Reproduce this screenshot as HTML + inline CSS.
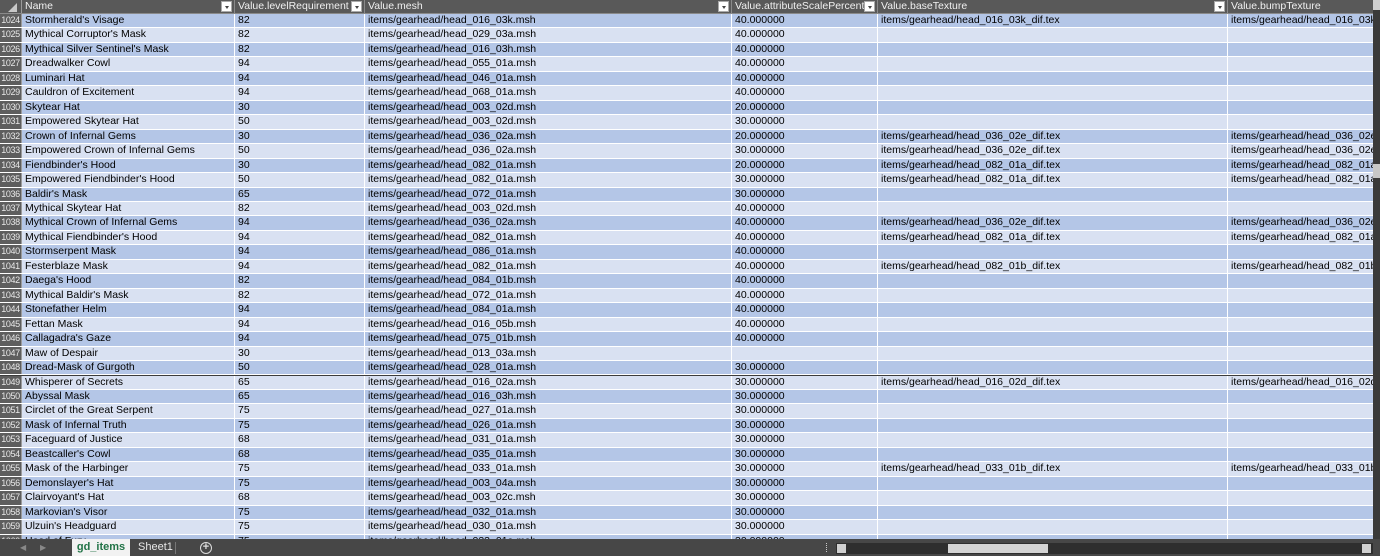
<!DOCTYPE html>
<html><head><meta charset="utf-8"><style>
*{margin:0;padding:0;box-sizing:border-box}
body{width:1380px;height:556px;overflow:hidden;background:#3c3c3c;font-family:"Liberation Sans",Arial,sans-serif;font-size:10.5px;position:relative}
.r{position:absolute;left:0;width:1373px;height:14.46px;display:flex;border-bottom:1px solid #fff}
.r div{border-right:1px solid #fff;padding-left:3px;white-space:nowrap;overflow:hidden;line-height:13.5px;color:#000}
.r .n{width:22px;background:#5e5e5e;color:#e8e8e8;padding-left:0;font-size:9px;letter-spacing:-0.4px;text-align:center;border-right:1px solid #9a9a9a}
.c1{width:213px}.c2{width:130px}.c3{width:367px}.c4{width:146px}.c5{width:350px}.c6{width:145px;border-right:none!important}
.o{background:#b4c6e7}.e{background:#d9e1f2}
.h{top:0;height:14px;background:#595959;border-bottom:1px solid #8a8a8a}
.h div{color:#f0f0f0;position:relative;border-right:1px solid #8a8a8a}
.h div i{position:absolute;right:2px;top:1px;width:11px;height:11px;background:#fff;border:1px solid #aaa}
.h div i:after{content:"";position:absolute;left:3px;top:4px;border:2px solid transparent;border-top:3px solid #444}
.h .n{background:#595959}
.tri{position:absolute;left:8px;top:3px;width:0;height:0;border-left:9px solid transparent;border-bottom:9px solid #c8c8c8}
</style></head><body>
<div class="r h"><div class="n"><span class="tri"></span></div><div class="c1">Name<i></i></div><div class="c2">Value.levelRequirement<i></i></div><div class="c3">Value.mesh<i></i></div><div class="c4">Value.attributeScalePercent<i></i></div><div class="c5">Value.baseTexture<i></i></div><div class="c6">Value.bumpTexture</div></div>
<div class="r o" style="top:14px"><div class="n">1024</div><div class="c1">Stormherald's Visage</div><div class="c2">82</div><div class="c3">items/gearhead/head_016_03k.msh</div><div class="c4">40.000000</div><div class="c5">items/gearhead/head_016_03k_dif.tex</div><div class="c6">items/gearhead/head_016_03k_</div></div>
<div class="r e" style="top:28.46px"><div class="n">1025</div><div class="c1">Mythical Corruptor's Mask</div><div class="c2">82</div><div class="c3">items/gearhead/head_029_03a.msh</div><div class="c4">40.000000</div><div class="c5"></div><div class="c6"></div></div>
<div class="r o" style="top:42.92px"><div class="n">1026</div><div class="c1">Mythical Silver Sentinel's Mask</div><div class="c2">82</div><div class="c3">items/gearhead/head_016_03h.msh</div><div class="c4">40.000000</div><div class="c5"></div><div class="c6"></div></div>
<div class="r e" style="top:57.38px"><div class="n">1027</div><div class="c1">Dreadwalker Cowl</div><div class="c2">94</div><div class="c3">items/gearhead/head_055_01a.msh</div><div class="c4">40.000000</div><div class="c5"></div><div class="c6"></div></div>
<div class="r o" style="top:71.84px"><div class="n">1028</div><div class="c1">Luminari Hat</div><div class="c2">94</div><div class="c3">items/gearhead/head_046_01a.msh</div><div class="c4">40.000000</div><div class="c5"></div><div class="c6"></div></div>
<div class="r e" style="top:86.3px"><div class="n">1029</div><div class="c1">Cauldron of Excitement</div><div class="c2">94</div><div class="c3">items/gearhead/head_068_01a.msh</div><div class="c4">40.000000</div><div class="c5"></div><div class="c6"></div></div>
<div class="r o" style="top:100.76px"><div class="n">1030</div><div class="c1">Skytear Hat</div><div class="c2">30</div><div class="c3">items/gearhead/head_003_02d.msh</div><div class="c4">20.000000</div><div class="c5"></div><div class="c6"></div></div>
<div class="r e" style="top:115.22px"><div class="n">1031</div><div class="c1">Empowered Skytear Hat</div><div class="c2">50</div><div class="c3">items/gearhead/head_003_02d.msh</div><div class="c4">30.000000</div><div class="c5"></div><div class="c6"></div></div>
<div class="r o" style="top:129.68px"><div class="n">1032</div><div class="c1">Crown of Infernal Gems</div><div class="c2">30</div><div class="c3">items/gearhead/head_036_02a.msh</div><div class="c4">20.000000</div><div class="c5">items/gearhead/head_036_02e_dif.tex</div><div class="c6">items/gearhead/head_036_02e_</div></div>
<div class="r e" style="top:144.14px"><div class="n">1033</div><div class="c1">Empowered Crown of Infernal Gems</div><div class="c2">50</div><div class="c3">items/gearhead/head_036_02a.msh</div><div class="c4">30.000000</div><div class="c5">items/gearhead/head_036_02e_dif.tex</div><div class="c6">items/gearhead/head_036_02e_</div></div>
<div class="r o" style="top:158.6px"><div class="n">1034</div><div class="c1">Fiendbinder's Hood</div><div class="c2">30</div><div class="c3">items/gearhead/head_082_01a.msh</div><div class="c4">20.000000</div><div class="c5">items/gearhead/head_082_01a_dif.tex</div><div class="c6">items/gearhead/head_082_01a_</div></div>
<div class="r e" style="top:173.06px"><div class="n">1035</div><div class="c1">Empowered Fiendbinder's Hood</div><div class="c2">50</div><div class="c3">items/gearhead/head_082_01a.msh</div><div class="c4">30.000000</div><div class="c5">items/gearhead/head_082_01a_dif.tex</div><div class="c6">items/gearhead/head_082_01a_</div></div>
<div class="r o" style="top:187.52px"><div class="n">1036</div><div class="c1">Baldir's Mask</div><div class="c2">65</div><div class="c3">items/gearhead/head_072_01a.msh</div><div class="c4">30.000000</div><div class="c5"></div><div class="c6"></div></div>
<div class="r e" style="top:201.98px"><div class="n">1037</div><div class="c1">Mythical Skytear Hat</div><div class="c2">82</div><div class="c3">items/gearhead/head_003_02d.msh</div><div class="c4">40.000000</div><div class="c5"></div><div class="c6"></div></div>
<div class="r o" style="top:216.44px"><div class="n">1038</div><div class="c1">Mythical Crown of Infernal Gems</div><div class="c2">94</div><div class="c3">items/gearhead/head_036_02a.msh</div><div class="c4">40.000000</div><div class="c5">items/gearhead/head_036_02e_dif.tex</div><div class="c6">items/gearhead/head_036_02e_</div></div>
<div class="r e" style="top:230.9px"><div class="n">1039</div><div class="c1">Mythical Fiendbinder's Hood</div><div class="c2">94</div><div class="c3">items/gearhead/head_082_01a.msh</div><div class="c4">40.000000</div><div class="c5">items/gearhead/head_082_01a_dif.tex</div><div class="c6">items/gearhead/head_082_01a_</div></div>
<div class="r o" style="top:245.36px"><div class="n">1040</div><div class="c1">Stormserpent Mask</div><div class="c2">94</div><div class="c3">items/gearhead/head_086_01a.msh</div><div class="c4">40.000000</div><div class="c5"></div><div class="c6"></div></div>
<div class="r e" style="top:259.82px"><div class="n">1041</div><div class="c1">Festerblaze Mask</div><div class="c2">94</div><div class="c3">items/gearhead/head_082_01a.msh</div><div class="c4">40.000000</div><div class="c5">items/gearhead/head_082_01b_dif.tex</div><div class="c6">items/gearhead/head_082_01b_</div></div>
<div class="r o" style="top:274.28px"><div class="n">1042</div><div class="c1">Daega's Hood</div><div class="c2">82</div><div class="c3">items/gearhead/head_084_01b.msh</div><div class="c4">40.000000</div><div class="c5"></div><div class="c6"></div></div>
<div class="r e" style="top:288.74px"><div class="n">1043</div><div class="c1">Mythical Baldir's Mask</div><div class="c2">82</div><div class="c3">items/gearhead/head_072_01a.msh</div><div class="c4">40.000000</div><div class="c5"></div><div class="c6"></div></div>
<div class="r o" style="top:303.2px"><div class="n">1044</div><div class="c1">Stonefather Helm</div><div class="c2">94</div><div class="c3">items/gearhead/head_084_01a.msh</div><div class="c4">40.000000</div><div class="c5"></div><div class="c6"></div></div>
<div class="r e" style="top:317.66px"><div class="n">1045</div><div class="c1">Fettan Mask</div><div class="c2">94</div><div class="c3">items/gearhead/head_016_05b.msh</div><div class="c4">40.000000</div><div class="c5"></div><div class="c6"></div></div>
<div class="r o" style="top:332.12px"><div class="n">1046</div><div class="c1">Callagadra's Gaze</div><div class="c2">94</div><div class="c3">items/gearhead/head_075_01b.msh</div><div class="c4">40.000000</div><div class="c5"></div><div class="c6"></div></div>
<div class="r e" style="top:346.58px"><div class="n">1047</div><div class="c1">Maw of Despair</div><div class="c2">30</div><div class="c3">items/gearhead/head_013_03a.msh</div><div class="c4"></div><div class="c5"></div><div class="c6"></div></div>
<div class="r o" style="top:361.04px"><div class="n">1048</div><div class="c1">Dread-Mask of Gurgoth</div><div class="c2">50</div><div class="c3">items/gearhead/head_028_01a.msh</div><div class="c4">30.000000</div><div class="c5"></div><div class="c6"></div></div>
<div class="r e" style="top:375.5px"><div class="n">1049</div><div class="c1">Whisperer of Secrets</div><div class="c2">65</div><div class="c3">items/gearhead/head_016_02a.msh</div><div class="c4">30.000000</div><div class="c5">items/gearhead/head_016_02d_dif.tex</div><div class="c6">items/gearhead/head_016_02d_</div></div>
<div class="r o" style="top:389.96px"><div class="n">1050</div><div class="c1">Abyssal Mask</div><div class="c2">65</div><div class="c3">items/gearhead/head_016_03h.msh</div><div class="c4">30.000000</div><div class="c5"></div><div class="c6"></div></div>
<div class="r e" style="top:404.42px"><div class="n">1051</div><div class="c1">Circlet of the Great Serpent</div><div class="c2">75</div><div class="c3">items/gearhead/head_027_01a.msh</div><div class="c4">30.000000</div><div class="c5"></div><div class="c6"></div></div>
<div class="r o" style="top:418.88px"><div class="n">1052</div><div class="c1">Mask of Infernal Truth</div><div class="c2">75</div><div class="c3">items/gearhead/head_026_01a.msh</div><div class="c4">30.000000</div><div class="c5"></div><div class="c6"></div></div>
<div class="r e" style="top:433.34px"><div class="n">1053</div><div class="c1">Faceguard of Justice</div><div class="c2">68</div><div class="c3">items/gearhead/head_031_01a.msh</div><div class="c4">30.000000</div><div class="c5"></div><div class="c6"></div></div>
<div class="r o" style="top:447.8px"><div class="n">1054</div><div class="c1">Beastcaller's Cowl</div><div class="c2">68</div><div class="c3">items/gearhead/head_035_01a.msh</div><div class="c4">30.000000</div><div class="c5"></div><div class="c6"></div></div>
<div class="r e" style="top:462.26px"><div class="n">1055</div><div class="c1">Mask of the Harbinger</div><div class="c2">75</div><div class="c3">items/gearhead/head_033_01a.msh</div><div class="c4">30.000000</div><div class="c5">items/gearhead/head_033_01b_dif.tex</div><div class="c6">items/gearhead/head_033_01b_</div></div>
<div class="r o" style="top:476.72px"><div class="n">1056</div><div class="c1">Demonslayer's Hat</div><div class="c2">75</div><div class="c3">items/gearhead/head_003_04a.msh</div><div class="c4">30.000000</div><div class="c5"></div><div class="c6"></div></div>
<div class="r e" style="top:491.18px"><div class="n">1057</div><div class="c1">Clairvoyant's Hat</div><div class="c2">68</div><div class="c3">items/gearhead/head_003_02c.msh</div><div class="c4">30.000000</div><div class="c5"></div><div class="c6"></div></div>
<div class="r o" style="top:505.64px"><div class="n">1058</div><div class="c1">Markovian's Visor</div><div class="c2">75</div><div class="c3">items/gearhead/head_032_01a.msh</div><div class="c4">30.000000</div><div class="c5"></div><div class="c6"></div></div>
<div class="r e" style="top:520.1px"><div class="n">1059</div><div class="c1">Ulzuin's Headguard</div><div class="c2">75</div><div class="c3">items/gearhead/head_030_01a.msh</div><div class="c4">30.000000</div><div class="c5"></div><div class="c6"></div></div>
<div class="r o" style="top:534.56px"><div class="n">1060</div><div class="c1">Hood of Fury</div><div class="c2">75</div><div class="c3">items/gearhead/head_033_01a.msh</div><div class="c4">30.000000</div><div class="c5"></div><div class="c6"></div></div>
<div style="position:absolute;left:1373px;top:0;width:7px;height:540px;background:#3a3a3a"></div>
<div style="position:absolute;left:1373px;top:164px;width:7px;height:14px;background:#c8c8c8"></div>
<div style="position:absolute;left:1373px;top:0;width:7px;height:10px;background:#d0d0d0"></div>
<div style="position:absolute;left:0;top:539px;width:1380px;height:17px;background:#474747"></div>
<div style="position:absolute;left:20px;top:543px;color:#888;font-size:8px">◀</div>
<div style="position:absolute;left:40px;top:543px;color:#888;font-size:8px">▶</div>
<div style="position:absolute;left:72px;top:539px;width:58px;height:17px;background:#f2f2f2;color:#217346;font-weight:bold;font-size:11px;text-align:center;line-height:17px">gd_items</div>
<div style="position:absolute;left:138px;top:539px;color:#e8e8e8;font-size:11px;line-height:17px">Sheet1</div>
<div style="position:absolute;left:175px;top:542px;width:1px;height:12px;background:#777"></div>
<div style="position:absolute;left:200px;top:542px;width:12px;height:12px;border:1.5px solid #ddd;border-radius:50%;color:#ddd;font-size:11px;line-height:9px;text-align:center;font-weight:bold">+</div>
<div style="position:absolute;left:826px;top:543px;width:1px;height:9px;border-left:1px dotted #ccc"></div>
<div style="position:absolute;left:836px;top:543px;width:537px;height:11px;background:#2e2e2e"></div>
<div style="position:absolute;left:837px;top:544px;width:9px;height:9px;background:#d0d0d0"></div>
<div style="position:absolute;left:1362px;top:544px;width:9px;height:9px;background:#d0d0d0"></div>
<div style="position:absolute;left:948px;top:544px;width:100px;height:9px;background:#d4d4d4"></div>
</body></html>
